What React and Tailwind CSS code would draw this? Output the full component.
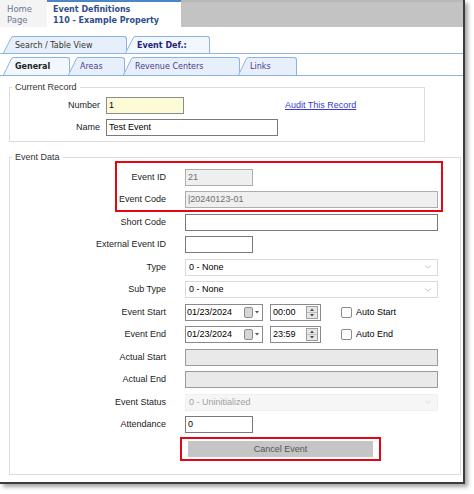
import { ChevronDown } from 'lucide-react'

function Tab({ label, bodyWidth, active, color, className = '' }) {
  return (
    <div className={`flex h-full ${className}`}>
      <svg width="10" height="100%" viewBox="0 0 10 18" preserveAspectRatio="none" className="block shrink-0">
        <path d="M0 18 L8 2.5 Q9 0.5 10 0.5 L10 18 Z" fill={active ? '#f2f7fd' : '#e7f0fa'} />
        <path d="M0.5 18 L8 2.5 Q9 0.5 10 0.5" fill="none" stroke="#8db3e2" vectorEffect="non-scaling-stroke" />
      </svg>
      <div
        className={`flex items-center rounded-tr-[3px] border-t border-r border-[#8db3e2] pl-[2px] ${active ? 'bg-[#f2f7fd] font-bold' : 'bg-[#e7f0fa]'} ${bodyWidth}`}
        style={{ color }}
      >
        {label}
      </div>
    </div>
  )
}

const tones = {
  normal: 'border-[#7a7a7a] bg-white text-black',
  yellow: 'border-[#8c8c8c] bg-[#fdfbd5] text-black',
  disabled: 'border-[#adadad] bg-[#efefef] text-[#6e6e6e]',
  empty: 'border-[#9a9a9a] bg-[#e9e9e9] text-[#6e6e6e]',
}

function Field({ className = '', tone = 'normal', children }) {
  return (
    <div className={`flex h-[17px] items-center border pl-[2px] ${tones[tone]} ${className}`}>
      {children}
    </div>
  )
}

function Select({ value, disabled }) {
  return (
    <div
      className={`flex h-[17px] w-[253px] items-center justify-between border pl-[3px] pr-[4px] ${disabled ? 'border-[#efefef] bg-[#f6f6f6] text-[#a0a0a0]' : 'border-[#dadada] bg-white text-black'}`}
    >
      <span>{value}</span>
      <ChevronDown size={10} strokeWidth={1.3} className={disabled ? 'text-[#c8c8c8]' : 'text-[#8a8a8a]'} />
    </div>
  )
}

function DateTime({ date, time, check }) {
  return (
    <div className="flex items-center">
      <div className="flex h-[17px] w-[78px] items-center border border-[#8a8a8a] bg-white pl-[1px]">
        <span className="w-[57px]">{date}</span>
        <svg width="18" height="11" viewBox="0 0 18 11" className="block">
          <rect x="0.5" y="0.5" width="8" height="10" rx="1.5" fill="#d6d6d6" stroke="#8c8c8c" />
          <path d="M11 4 L15 4 L13 6.5 Z" fill="#555" />
        </svg>
      </div>
      <div className="ml-[7px] flex h-[17px] w-[51px] items-center justify-between border border-[#8a8a8a] bg-white pl-[2px] pr-[2px]">
        <span>{time}</span>
        <svg width="12" height="13" viewBox="0 0 12 13" className="block">
          <rect x="0.5" y="0.5" width="11" height="12" fill="#e6e6e6" stroke="#a0a0a0" />
          <path d="M4 5 L8 5 L6 2.5 Z" fill="#444" />
          <path d="M4 8 L8 8 L6 10.5 Z" fill="#444" />
          <line x1="1" y1="6.5" x2="11" y2="6.5" stroke="#bdbdbd" />
        </svg>
      </div>
      <div className="ml-[20px] h-[11px] w-[11px] rounded-[2px] border border-[#8c8c8c] bg-white" />
      <span className="ml-[4px]">{check}</span>
    </div>
  )
}

function Row({ label, children }) {
  return (
    <div className="flex h-[22.5px] items-center">
      <div className="w-[156px] text-right text-[#222]">{label}</div>
      <div className="ml-[19px] flex items-center">{children}</div>
    </div>
  )
}

export default function App() {
  return (
    <div className="h-[494px] w-[474px] bg-white font-['Liberation_Sans',Arial,sans-serif] text-[9px] leading-[11px]">
      <div className="h-[484px] w-[465px] border-r-2 border-b-2 border-[#3c3c3c] shadow-[3px_3px_4px_rgba(0,0,0,0.35)]">
        {/* header */}
        <div className="flex h-[27px] font-['DejaVu_Sans',Verdana,sans-serif] text-[8.5px] leading-[11px]">
          <div className="w-[47px] bg-[#f4f4f4] pt-[4px] pl-[7px] text-[#6a7894]">
            <div>Home</div>
            <div>Page</div>
          </div>
          <div className="w-[134px] border-t-2 border-[#4d86c6] bg-white pt-[2px] pl-[6px] text-[8px] font-bold text-[#2f4d8c]">
            <div>Event Definitions</div>
            <div>110 - Example Property</div>
          </div>
          <div className="flex-1 border-t-2 border-[#b8b8b8] bg-[#c3c3c3]" />
        </div>

        {/* tab rows */}
        <div className="mt-[9px] font-['DejaVu_Sans',Verdana,sans-serif] text-[8px]">
          <div className="flex h-[18px] border-b border-[#8db3e2] pl-[3px]">
            <Tab label="Search / Table View" bodyWidth="w-[114px]" color="#333" />
            <Tab label="Event Def.:" bodyWidth="w-[75px]" active color="#23237a" className="-ml-[2px]" />
          </div>
          <div className="mt-[3px] flex h-[19px] border-b border-[#8db3e2] pl-[3px]">
            <Tab label="General" bodyWidth="w-[57px]" active color="#222" />
            <Tab label="Areas" bodyWidth="w-[47px]" color="#4a3b8c" className="-ml-[2px]" />
            <Tab label="Revenue Centers" bodyWidth="w-[107px]" color="#4a3b8c" className="-ml-[2px]" />
            <Tab label="Links" bodyWidth="w-[49px]" color="#4a3b8c" className="-ml-[2px]" />
          </div>
        </div>

        {/* current record */}
        <fieldset className="mt-[6px] ml-[9px] w-[416px] border border-[#dcdcdc] px-0 pb-[5px]">
          <legend className="ml-[2px] px-[3px] text-[#333]">Current Record</legend>
          <div className="mt-[4px] flex h-[17px] items-center">
            <div className="w-[90px] text-right text-[#222]">Number</div>
            <Field tone="yellow" className="ml-[6px] w-[78px]">1</Field>
            <a className="ml-[101px] text-[#3a3acb] underline">Audit This Record</a>
          </div>
          <div className="mt-[5px] flex h-[17px] items-center">
            <div className="w-[90px] text-right text-[#222]">Name</div>
            <Field className="ml-[6px] w-[172px]">Test Event</Field>
          </div>
        </fieldset>

        {/* event data */}
        <fieldset className="mt-[10px] ml-[9px] w-[452px] border border-[#dcdcdc] px-0 pt-[3px] pb-[13px]">
          <legend className="ml-[2px] px-[3px] text-[#333]">Event Data</legend>
          <div className="relative">
            <Row label="Event ID">
              <Field tone="disabled" className="w-[68px]">21</Field>
            </Row>
            <Row label="Event Code">
              <Field tone="disabled" className="w-[253px]">|20240123-01</Field>
            </Row>
            <div className="absolute -top-[5px] right-[17px] -bottom-[1px] left-[105px] border-2 border-[#e30613]" />
          </div>
          <Row label="Short Code">
            <Field className="w-[253px]" />
          </Row>
          <Row label="External Event ID">
            <Field className="w-[68px]" />
          </Row>
          <Row label="Type">
            <Select value="0 - None" />
          </Row>
          <Row label="Sub Type">
            <Select value="0 - None" />
          </Row>
          <Row label="Event Start">
            <DateTime date="01/23/2024" time="00:00" check="Auto Start" />
          </Row>
          <Row label="Event End">
            <DateTime date="01/23/2024" time="23:59" check="Auto End" />
          </Row>
          <Row label="Actual Start">
            <Field tone="empty" className="w-[253px]" />
          </Row>
          <Row label="Actual End">
            <Field tone="empty" className="w-[253px]" />
          </Row>
          <Row label="Event Status">
            <Select value="0 - Uninitialized" disabled />
          </Row>
          <Row label="Attendance">
            <Field className="w-[68px]">0</Field>
          </Row>
          <div className="mt-[1px] ml-[170px] w-[201px] border-2 border-[#e30613] px-[6px] pt-[2px] pb-[2px]">
            <div className="flex h-[16px] items-center justify-center bg-[#c5c5c5] text-[#555]">Cancel Event</div>
          </div>
        </fieldset>
      </div>
    </div>
  )
}
